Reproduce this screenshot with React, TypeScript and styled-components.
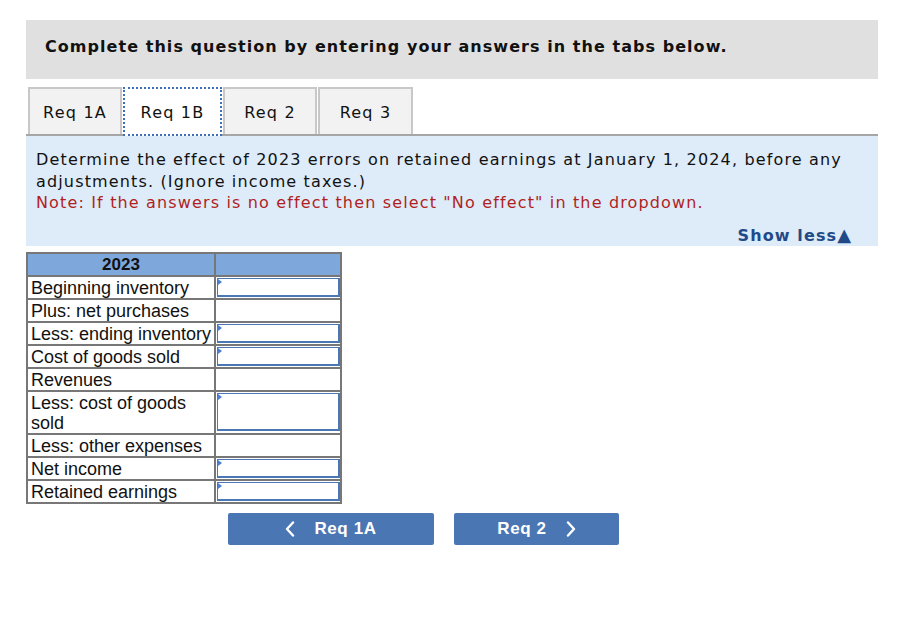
import React from 'react'
import styled, { createGlobalStyle } from 'styled-components'

const GlobalStyle = createGlobalStyle`
  body {
    margin: 0;
    background: #ffffff;
    font-family: 'DejaVu Sans', Verdana, sans-serif;
  }
`

const Page = styled.div`
  padding: 20px 38px 0 26px;
  width: 852px;
`

const Banner = styled.div`
  background: #e0e0e0;
  height: 59px;
  box-sizing: border-box;
  display: flex;
  align-items: center;
  padding: 0 0 7px 19px;
  font-weight: 700;
  font-size: 16px;
  letter-spacing: 1.05px;
  color: #111;
`

const TabBar = styled.div`
  display: flex;
  align-items: flex-end;
  margin-top: 8px;
  padding-left: 2px;
  gap: 1px;
  border-bottom: 2px solid #a6a6a6;
`

const Tab = styled.div<{ $active?: boolean; $w: number }>`
  width: ${p => p.$w}px;
  box-sizing: border-box;
  display: flex;
  align-items: center;
  justify-content: center;
  padding-top: 2px;
  font-size: 16px;
  letter-spacing: 1.2px;
  color: #111;
  background: ${p => (p.$active ? '#ffffff' : '#f2f2f2')};
  border: ${p => (p.$active ? '2px dotted #3c6fb8' : '2px solid #c8c8c8')};
  border-bottom: ${p => (p.$active ? '2px dotted #3c6fb8' : 'none')};
  margin-bottom: ${p => (p.$active ? '-2px' : '0')};
  height: ${p => (p.$active ? '49px' : '47px')};
`

const Prompt = styled.div`
  background: #deebf8;
  padding: 13px 10px 0 10px;
  font-size: 16px;
  line-height: 21.5px;
  letter-spacing: 1.15px;
  color: #111;
`

const Note = styled.div`
  color: #b01f1f;
`

const ShowLess = styled.div`
  text-align: right;
  font-weight: 700;
  color: #1f4a87;
  font-size: 16px;
  letter-spacing: 1.1px;
  margin-top: 10px;
  padding-right: 17px;
`

const Triangle = styled.span`
  font-size: 18px;
  letter-spacing: 0;
`

const Grid = styled.table`
  margin-top: 6px;
  width: 314px;
  table-layout: fixed;
  border-collapse: collapse;
  border: 2px solid #777;
  font-family: 'Liberation Sans', Arial, sans-serif;
  font-size: 18px;
  color: #111;
`

const HeadCell = styled.th`
  background: #7ea8db;
  border: 2px solid #777;
  height: 21px;
  padding: 0;
  font-weight: 700;
  font-size: 17px;
  text-align: center;
  line-height: 21px;
`

const LabelCell = styled.td`
  border: 2px solid #777;
  padding: 1px 2px 0 3px;
  line-height: 20px;
  vertical-align: top;
`

const InputCell = styled.td`
  border: 2px solid #777;
  padding: 1px 0 0 0;
  background: #fff;
  vertical-align: top;
`

const Entry = styled.div<{ $tall?: boolean }>`
  position: relative;
  height: ${p => (p.$tall ? '35px' : '16px')};
  border: 2px solid #4b78b4;
  border-top-width: 1px;
  border-left-width: 1px;
  margin: 0 0 1px 1px;
  &::before {
    content: '';
    position: absolute;
    top: 0;
    left: 0;
    border-left: 4px solid #4b7fcf;
    border-top: 3px solid transparent;
    border-bottom: 3px solid transparent;
  }
`

const Nav = styled.div`
  display: flex;
  gap: 20px;
  margin: 9px 0 0 202px;
`

const NavButton = styled.div<{ $w: number }>`
  width: ${p => p.$w}px;
  height: 32px;
  background: #4a76b3;
  border-radius: 2px;
  display: flex;
  align-items: center;
  justify-content: center;
  gap: 19px;
  color: #fff;
  font-family: 'Liberation Sans', Arial, sans-serif;
  font-weight: 700;
  font-size: 17px;
  letter-spacing: 0.6px;
`

const Chevron = ({ dir }: { dir: 'left' | 'right' }) => (
  <svg width='10' height='16' viewBox='0 0 10 16'>
    <path
      d={dir === 'left' ? 'M8 1.5 L2 8 L8 14.5' : 'M2 1.5 L8 8 L2 14.5'}
      fill='none'
      stroke='#fff'
      strokeWidth='2.4'
      strokeLinecap='round'
      strokeLinejoin='round'
    />
  </svg>
)

const rows: { label: string; entry: boolean; tall?: boolean }[] = [
  { label: 'Beginning inventory', entry: true },
  { label: 'Plus: net purchases', entry: false },
  { label: 'Less: ending inventory', entry: true },
  { label: 'Cost of goods sold', entry: true },
  { label: 'Revenues', entry: false },
  { label: 'Less: cost of goods sold', entry: true, tall: true },
  { label: 'Less: other expenses', entry: false },
  { label: 'Net income', entry: true },
  { label: 'Retained earnings', entry: true }
]

const App: React.FC = () => (
  <>
    <GlobalStyle />
    <Page>
      <Banner>Complete this question by entering your answers in the tabs below.</Banner>
      <TabBar>
        <Tab $w={94}>Req 1A</Tab>
        <Tab $w={99} $active>
          Req 1B
        </Tab>
        <Tab $w={94}>Req 2</Tab>
        <Tab $w={95}>Req 3</Tab>
      </TabBar>
      <Prompt>
        Determine the effect of 2023 errors on retained earnings at January 1, 2024, before any
        adjustments. (Ignore income taxes.)
        <Note>Note: If the answers is no effect then select "No effect" in the dropdown.</Note>
        <ShowLess>
          Show less<Triangle>▲</Triangle>
        </ShowLess>
      </Prompt>
      <Grid>
        <colgroup>
          <col style={{ width: 188 }} />
          <col style={{ width: 126 }} />
        </colgroup>
        <thead>
          <tr>
            <HeadCell>2023</HeadCell>
            <HeadCell />
          </tr>
        </thead>
        <tbody>
          {rows.map((r, i) => (
            <tr key={i}>
              <LabelCell>{r.label}</LabelCell>
              <InputCell>{r.entry ? <Entry $tall={r.tall} /> : null}</InputCell>
            </tr>
          ))}
        </tbody>
      </Grid>
      <Nav>
        <NavButton $w={206}>
          <Chevron dir='left' />
          Req 1A
        </NavButton>
        <NavButton $w={165}>
          Req 2
          <Chevron dir='right' />
        </NavButton>
      </Nav>
    </Page>
  </>
)

export default App
